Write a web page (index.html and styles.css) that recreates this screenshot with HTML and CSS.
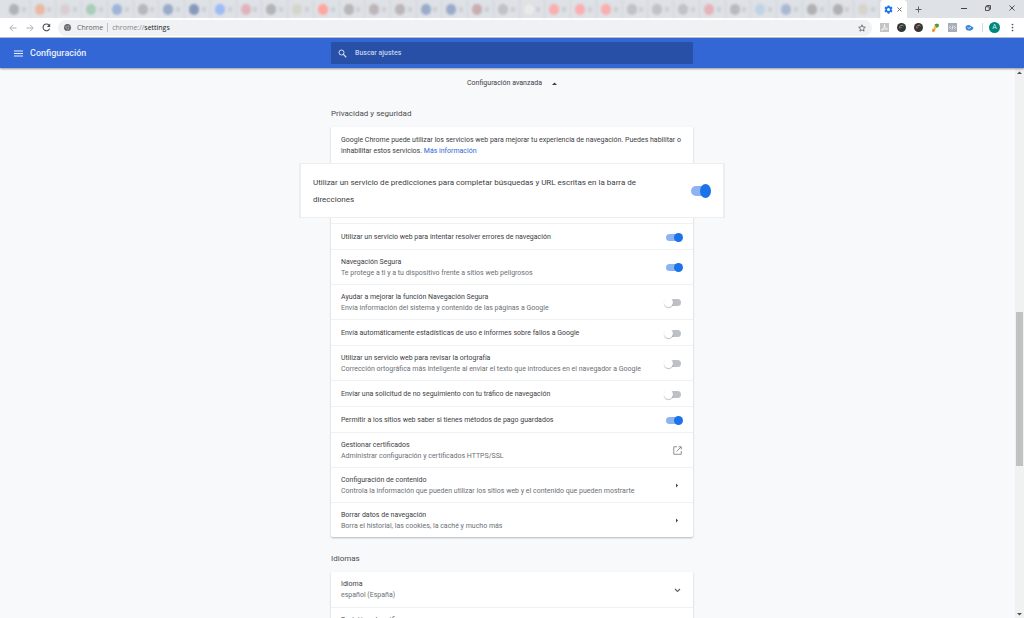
FILE: index.html
```html
<!DOCTYPE html>
<html lang="es">
<head>
    <meta charset="UTF-8">
    <meta name="viewport" content="width=device-width, initial-scale=1.0">
    <title>Configuración</title>
    <link rel="stylesheet" href="styles.css">
</head>
<body>
    <div class="tab-strip">
        <div class="tabs" id="tabs"></div>
        <div class="tab-active">
            <svg width="9" height="9" viewBox="0 0 24 24"><path fill="#1a73e8" fill-rule="evenodd" d="M9.5 1h5l.6 3.2 2 1.1 3-1.1 2.6 4.4-2.500 2.100v2.600l2.500 2.100-2.600 4.400-3-1.100-2 1.100-.6 3.200h-5l-.6-3.200-2-1.100-3 1.100L1.300 15.400l2.500-2.100v-2.600L1.300 8.600l2.600-4.400 3 1.100 2-1.100zM12 8a4 4 0 1 0 0 8 4 4 0 0 0 0-8z"/></svg>
            <button class="icon-btn" aria-label="Cerrar pestaña"><svg width="5" height="5" viewBox="0 0 10 10"><path d="M1 1l8 8M9 1l-8 8" stroke="#5f6368" stroke-width="1.800"/></svg></button>
        </div>
        <button class="icon-btn new-tab" aria-label="Nueva pestaña"><svg width="7" height="7" viewBox="0 0 14 14"><path d="M7 1v12M1 7h12" stroke="#5f6368" stroke-width="2"/></svg></button>
        <div class="window-controls">
            <button class="icon-btn" aria-label="Minimizar"><svg width="6" height="6" viewBox="0 0 12 12"><path d="M0 7h12" stroke="#444" stroke-width="2"/></svg></button>
            <button class="icon-btn" aria-label="Restaurar"><svg width="6" height="6" viewBox="0 0 12 12"><path d="M1 3.500h7.500V11H1zM3.500 3.500V1H11v7.500H8.500" fill="none" stroke="#444" stroke-width="1.800"/></svg></button>
            <button class="icon-btn" aria-label="Cerrar"><svg width="6" height="6" viewBox="0 0 12 12"><path d="M1 1l10 10M11 1L1 11" stroke="#444" stroke-width="1.800"/></svg></button>
        </div>
    </div>

    <div class="toolbar">
        <button class="icon-btn nav-btn" aria-label="Atrás"><svg width="8" height="8" viewBox="0 0 16 16"><path d="M15 8H2M8 1.500L1.500 8 8 14.500" fill="none" stroke="#a5a8ab" stroke-width="1.800"/></svg></button>
        <button class="icon-btn nav-btn" aria-label="Adelante"><svg width="8" height="8" viewBox="0 0 16 16"><path d="M1 8h13M8 1.500L14.500 8 8 14.500" fill="none" stroke="#a5a8ab" stroke-width="1.800"/></svg></button>
        <button class="icon-btn nav-btn" aria-label="Recargar"><svg width="9" height="9" viewBox="0 0 16 16"><path d="M13.500 10A6 6 0 1 1 12.500 4" fill="none" stroke="#4a4d51" stroke-width="2"/><path d="M14.500 1v6h-6z" fill="#4a4d51"/></svg></button>
        <div class="omnibox">
            <svg width="7" height="7" viewBox="0 0 14 14"><circle cx="7" cy="7" r="7" fill="#5f6368"/><circle cx="7" cy="7" r="2.800" fill="#5f6368" stroke="#c5c8ca"/><path d="M7 4h6.200M4.400 8.400L1.400 3.200M9.600 8.400L6.500 13.800" stroke="#c5c8ca"/></svg>
            <span class="origin">Chrome</span>
            <label class="scheme" for="url">chrome://</label>
            <input class="url" id="url" type="text" value="settings">
            <button class="icon-btn" aria-label="Añadir a marcadores"><svg width="8" height="8" viewBox="0 0 24 24"><path d="M12 2.500l2.900 6.500 7.100.7-5.300 4.700 1.500 7L12 17.800l-6.200 3.600 1.500-7L2 9.700 9.100 9z" fill="none" stroke="#4a4d51" stroke-width="2.200"/></svg></button>
        </div>
        <div class="extensions">
            <svg width="9" height="9" viewBox="0 0 18 18"><path fill="#c4c4c4" d="M0 0h18v18H0z"/><path d="M3 14c4-2 6-6 6-11 0 5 2 8 6 9-4-1-8 0-12 2z" fill="none" stroke="#fff" stroke-width="1.500"/></svg>
            <svg width="9" height="9" viewBox="0 0 18 18"><circle cx="9" cy="9" r="9" fill="#333639"/><path d="M5 10a4 4 0 0 1 3-5" fill="none" stroke="#e5533d" stroke-width="2"/><path d="M8 5a4 4 0 0 1 5 1" fill="none" stroke="#8bc34a" stroke-width="2"/><path d="M6 11l3-3" stroke="#19b5c9" stroke-width="2"/></svg>
            <svg width="9" height="9" viewBox="0 0 18 18"><circle cx="9" cy="9" r="9" fill="#333639"/><path d="M5 10a4 4 0 0 1 3-5" fill="none" stroke="#e5533d" stroke-width="2"/><path d="M8 5a4 4 0 0 1 5 1" fill="none" stroke="#8bc34a" stroke-width="2"/><path d="M6 11l3-3" stroke="#e5533d" stroke-width="2"/></svg>
            <svg width="9" height="9" viewBox="0 0 18 18"><path d="M7 3l5-2 4 2-1 5-5 2z" fill="#4c9a3c"/><path d="M6 6l5 2-2 5-4-2z" fill="#f2c230"/><path d="M3 11l6 2-3 5-4-1z" fill="#f08a24"/></svg>
            <svg width="9" height="9" viewBox="0 0 18 18"><path fill="#a9adb8" d="M0 0h18v18H0z"/><path d="M5.500 6L3 9l2.500 3M12.500 6L15 9l-2.500 3M10 5l-2 8" fill="none" stroke="#fff" stroke-width="1.500"/></svg>
            <svg width="9" height="9" viewBox="0 0 18 18"><path d="M1 9c0-4 5-6 9-4l7 4c0 5-6 7-11 6-3-.5-5-3-5-6z" fill="#3f86d8"/><path d="M5 9l3 2 4-3" fill="none" stroke="#fff" stroke-width="1.500"/></svg>
        </div>
        <button class="avatar" aria-label="Perfil">A</button>
        <button class="icon-btn menu-btn" aria-label="Menú"><svg width="3" height="9" viewBox="0 0 6 18"><circle cx="3" cy="3" r="1.700" fill="#4a4d51"/><circle cx="3" cy="9" r="1.700" fill="#4a4d51"/><circle cx="3" cy="15" r="1.700" fill="#4a4d51"/></svg></button>
    </div>

    <header class="header">
        <div class="brand">
            <button class="icon-btn" aria-label="Menú principal"><svg width="9" height="7" viewBox="0 0 18 14"><path d="M0 2h18M0 7h18M0 12h18" stroke="#e8effc" stroke-width="2.200"/></svg></button>
            <h1>Configuración</h1>
        </div>
        <div class="search">
            <svg width="9" height="9" viewBox="0 0 18 18"><circle cx="7" cy="7" r="5" fill="none" stroke="#d5e0f7" stroke-width="2"/><path d="M10.500 10.500l6 6" stroke="#d5e0f7" stroke-width="2.200"/></svg>
            <input type="search" placeholder="Buscar ajustes" aria-label="Buscar ajustes">
        </div>
    </header>

    <main class="page">
        <button class="advanced">Configuración avanzada <svg width="5" height="3" viewBox="0 0 10 6"><path d="M0 6l5-5 5 5z" fill="#3c4043"/></svg></button>

        <section>
            <h2>Privacidad y seguridad</h2>
            <div class="card">
                <p class="intro">Google Chrome puede utilizar los servicios web para mejorar tu experiencia de navegación. Puedes habilitar o inhabilitar estos servicios. <a href="#">Más información</a></p>
                <div class="row row-large">
                    <label for="predictions">Utilizar un servicio de predicciones para completar búsquedas y URL escritas en la barra de direcciones</label>
                    <input class="toggle" type="checkbox" id="predictions" checked>
                </div>
                <div class="row">
                    <label for="errors">Utilizar un servicio web para intentar resolver errores de navegación</label>
                    <input class="toggle" type="checkbox" id="errors" checked>
                </div>
                <div class="row two-line">
                    <label for="safe">Navegación Segura<span>Te protege a ti y a tu dispositivo frente a sitios web peligrosos</span></label>
                    <input class="toggle" type="checkbox" id="safe" checked>
                </div>
                <div class="row two-line">
                    <label for="improve">Ayudar a mejorar la función Navegación Segura<span>Envía información del sistema y contenido de las páginas a Google</span></label>
                    <input class="toggle" type="checkbox" id="improve">
                </div>
                <div class="row">
                    <label for="stats">Envía automáticamente estadísticas de uso e informes sobre fallos a Google</label>
                    <input class="toggle" type="checkbox" id="stats">
                </div>
                <div class="row two-line">
                    <label for="spelling">Utilizar un servicio web para revisar la ortografía<span>Corrección ortográfica más inteligente al enviar el texto que introduces en el navegador a Google</span></label>
                    <input class="toggle" type="checkbox" id="spelling">
                </div>
                <div class="row">
                    <label for="dnt">Enviar una solicitud de no seguimiento con tu tráfico de navegación</label>
                    <input class="toggle" type="checkbox" id="dnt">
                </div>
                <div class="row">
                    <label for="payments">Permitir a los sitios web saber si tienes métodos de pago guardados</label>
                    <input class="toggle" type="checkbox" id="payments" checked>
                </div>
                <button class="row two-line">
                    <span class="text">Gestionar certificados<span>Administrar configuración y certificados HTTPS/SSL</span></span>
                    <span class="action"><svg width="9" height="9" viewBox="0 0 18 18"><path d="M8 1.500H1.500v15h15V10M11 1.500h5.500V7M16 2L7 11" fill="none" stroke="#80868b" stroke-width="1.800"/></svg></span>
                </button>
                <button class="row two-line">
                    <span class="text">Configuración de contenido<span>Controla la información que pueden utilizar los sitios web y el contenido que pueden mostrarte</span></span>
                    <span class="action"><svg width="3" height="5" viewBox="0 0 6 10"><path d="M0 1l4 4-4 4z" fill="#3c4043"/></svg></span>
                </button>
                <button class="row two-line">
                    <span class="text">Borrar datos de navegación<span>Borra el historial, las cookies, la caché y mucho más</span></span>
                    <span class="action"><svg width="3" height="5" viewBox="0 0 6 10"><path d="M0 1l4 4-4 4z" fill="#3c4043"/></svg></span>
                </button>
            </div>
        </section>

        <section>
            <h2>Idiomas</h2>
            <div class="card">
                <button class="row two-line">
                    <span class="text">Idioma<span>español (España)</span></span>
                    <span class="action"><svg width="7" height="5" viewBox="0 0 14 10"><path d="M2 2l5 5 5-5" fill="none" stroke="#5f6368" stroke-width="2.200"/></svg></span>
                </button>
                <button class="row two-line">
                    <span class="text">Revisión ortográfica</span>
                </button>
            </div>
        </section>

        <div class="scrollbar">
            <svg width="5" height="3" viewBox="0 0 10 6"><path d="M0 6l5-5 5 5z" fill="#505050"/></svg>
            <div class="track"><div class="thumb"></div></div>
            <svg width="5" height="3" viewBox="0 0 10 6"><path d="M0 0l5 5 5-5z" fill="#505050"/></svg>
        </div>
    </main>

    <script>
        // favicon colour of each background tab
        const favicons = [
            '#b0b3b5', '#e8b9a5', '#d9cfd0', '#a9cdb9', '#9fb4d8', '#b5b7b9', '#9aabc9', '#8799bb',
            '#9cbcf4', '#e0b3bc', '#b2b4b6', '#d5d6cb', '#ffa69e', '#b8b6b8', '#bdb6b8', '#bdb6b8',
            '#9aabc9', '#9aabc9', '#c9aeb0', '#c0c2c5', '#e9ebe6', '#fbaeb0', '#fbaeb0', '#fbaeb0',
            '#c0c2c5', '#c0c2c5', '#c0c2c5', '#e5b3b9', '#b8babd', '#bfd3e6', '#a9b9d3', '#b0b0b3',
            '#b0b0b3', '#d8d3cb'
        ];
        const tabs = document.getElementById('tabs');
        favicons.forEach(color => {
            const tab = document.createElement('div');
            tab.className = 'tab';
            tab.innerHTML = `<i class="favicon" style="background-color: ${color}"></i><i class="tab-close"></i>`;
            tabs.appendChild(tab);
        });
    </script>
</body>
</html>
```
FILE: styles.css
```css
* {
    box-sizing: border-box;
}
body {
    display: flex;
    flex-direction: column;
    height: 100vh;
    margin: 0;
    overflow: hidden;
    background-color: #f8f9fa;
    color: #3c4043;
    font-family: Roboto, "Liberation Sans", sans-serif;
    font-size: 7px;
    line-height: 11px;
}
svg {
    display: block;
    flex: none;
}
button {
    padding: 0;
    border: none;
    background: none;
    color: inherit;
    font: inherit;
    cursor: pointer;
}
input {
    margin: 0;
    padding: 0;
    border: none;
    outline: none;
    background: none;
    color: inherit;
    font: inherit;
}
.icon-btn {
    display: flex;
    flex: none;
    align-items: center;
    justify-content: center;
}

/* Tab strip */
.tab-strip {
    display: flex;
    flex: none;
    height: 18px;
    padding-left: 5px;
    background-color: #dee1e6;
}
.tabs {
    display: flex;
    flex: 1;
    min-width: 0;
    overflow: hidden;
    filter: blur(1px);
}
.tab {
    display: flex;
    flex: 1;
    align-items: center;
    justify-content: space-between;
    padding: 0 4px;
    border-right: 1px solid #d2d5da;
}
.favicon {
    width: 10px;
    height: 11px;
    border-radius: 5px;
}
.tab-close {
    width: 4px;
    height: 5px;
    background-color: #cdd0d4;
}
.tab-active {
    display: flex;
    align-items: center;
    gap: 4px;
    width: 27px;
    padding: 0 4px;
    border-radius: 4px 4px 0 0;
    background-color: #fff;
}
.new-tab {
    width: 22px;
}
.window-controls {
    display: flex;
    align-items: center;
    gap: 18px;
    padding: 0 9px 2px 32px;
}

/* Toolbar */
.toolbar {
    display: flex;
    flex: none;
    align-items: center;
    height: 20px;
    padding: 0 9px 0 4px;
    border-bottom: 1px solid #b9c0cc;
    background-color: #fff;
}
.nav-btn {
    width: 17px;
}
.omnibox {
    display: flex;
    flex: 1;
    align-items: center;
    height: 16px;
    margin-left: 3px;
    padding: 0 6px;
    border-radius: 8px;
    background-color: #eff1f2;
    font-family: "Open Sans", "Noto Sans", sans-serif;
}
.origin {
    margin: 0 4px 0 6px;
    padding-right: 4px;
    border-right: 1px solid #bdc1c6;
    color: #5f6368;
    line-height: 9px;
}
.scheme {
    color: #80868b;
}
.url {
    flex: 1;
    min-width: 0;
    color: #202124;
}
.extensions {
    display: flex;
    gap: 8px;
    margin-left: 8px;
    padding-right: 8px;
    border-right: 1px solid #d5d7da;
}
.avatar {
    width: 11px;
    height: 11px;
    margin: 0 10px 0 6px;
    border-radius: 50%;
    background-color: #00897b;
    color: #d6efec;
    text-align: center;
}
.menu-btn {
    width: 5px;
}

/* Settings header */
.header {
    display: grid;
    flex: none;
    grid-template-columns: 1fr minmax(0, 362px) 1fr;
    align-items: center;
    height: 30px;
    background-color: #3367d6;
    box-shadow: 0 1px 2px rgba(0,0,0,0.4);
    z-index: 1;
}
.brand {
    display: flex;
    align-items: center;
    gap: 7px;
    padding-left: 14px;
}
h1 {
    margin: 0;
    color: #e8effc;
    font-size: 9px;
    font-weight: 500;
}
.search {
    display: flex;
    align-items: center;
    gap: 8px;
    height: 22px;
    padding: 0 7px;
    border-radius: 1px;
    background-color: #2850a7;
}
.search input {
    flex: 1;
    min-width: 0;
    color: #c3d0ec;
    font-weight: 500;
}
.search input::placeholder {
    color: #c3d0ec;
    opacity: 1;
}

/* Settings page */
.page {
    position: relative;
    flex: 1;
    min-height: 0;
    overflow: hidden;
}
.advanced {
    display: flex;
    align-items: center;
    gap: 10px;
    margin: 10px auto 18px;
}
section {
    max-width: 362px;
    margin: 0 auto 15px;
}
h2 {
    margin: 0 0 7px;
    color: #4a4d51;
    font-size: 8px;
    font-weight: 400;
    line-height: 13px;
}
.card {
    border-radius: 2px;
    background-color: #fff;
    box-shadow: 0 1px 2px rgba(60,64,67,0.35);
}
.intro {
    margin: 0;
    padding: 8px 10px 6px;
}
.intro a {
    color: #3367d6;
    text-decoration: none;
}
.row {
    display: flex;
    align-items: center;
    justify-content: space-between;
    width: 100%;
    min-height: 26px;
    padding: 1px 10px 0;
    border-top: 1px solid #eff1f2;
    text-align: left;
}
.row:first-child {
    border-top: none;
}
.two-line {
    min-height: 35px;
}
.two-line .text {
    min-height: 22px;
}
.two-line span span,
.two-line label span {
    display: block;
    color: #6b7075;
}
.action {
    display: flex;
    justify-content: center;
    width: 12px;
}

/* Highlighted row, wider than the card */
.row-large {
    position: relative;
    width: auto;
    min-height: 55px;
    margin: 0 -32px 5px;
    padding: 0 12px;
    border: 1px solid #eceeef;
    border-width: 1px 2px;
    background-color: #fff;
    font-size: 8px;
    line-height: 17px;
}
.row-large label {
    max-width: 336px;
}

/* Toggle switch */
.toggle {
    position: relative;
    flex: none;
    width: 19px;
    height: 9px;
    appearance: none;
    cursor: pointer;
}
.toggle::before {
    content: "";
    position: absolute;
    inset: 1px 2px;
    border-radius: 4px;
    background-color: #bdc1c6;
}
.toggle::after {
    content: "";
    position: absolute;
    top: 0;
    left: 0;
    width: 9px;
    height: 9px;
    border-radius: 50%;
    background-color: #fff;
    box-shadow: 0 1px 1px rgba(0,0,0,0.25);
}
.toggle:checked::before {
    background-color: #8cb4f4;
}
.toggle:checked::after {
    right: 0;
    left: auto;
    background-color: #1a73e8;
    box-shadow: none;
}
.row-large .toggle {
    width: 21px;
    height: 14px;
}
.row-large .toggle::before {
    inset: 2px 1px;
    border-radius: 5px;
}
.row-large .toggle::after {
    width: 11px;
    height: 14px;
}

/* Scrollbar */
.scrollbar {
    position: absolute;
    top: 0;
    right: 0;
    bottom: 0;
    display: flex;
    flex-direction: column;
    align-items: center;
    width: 9px;
    padding: 3px 0 2px;
    background-color: #f1f1f1;
}
.track {
    display: flex;
    flex: 1;
    flex-direction: column;
    width: 7px;
    padding: 3px 0;
}
.track::before {
    content: "";
    flex: 235;
}
.track::after {
    content: "";
    flex: 144;
}
.thumb {
    flex: 153;
    background-color: #c1c1c1;
}
```
